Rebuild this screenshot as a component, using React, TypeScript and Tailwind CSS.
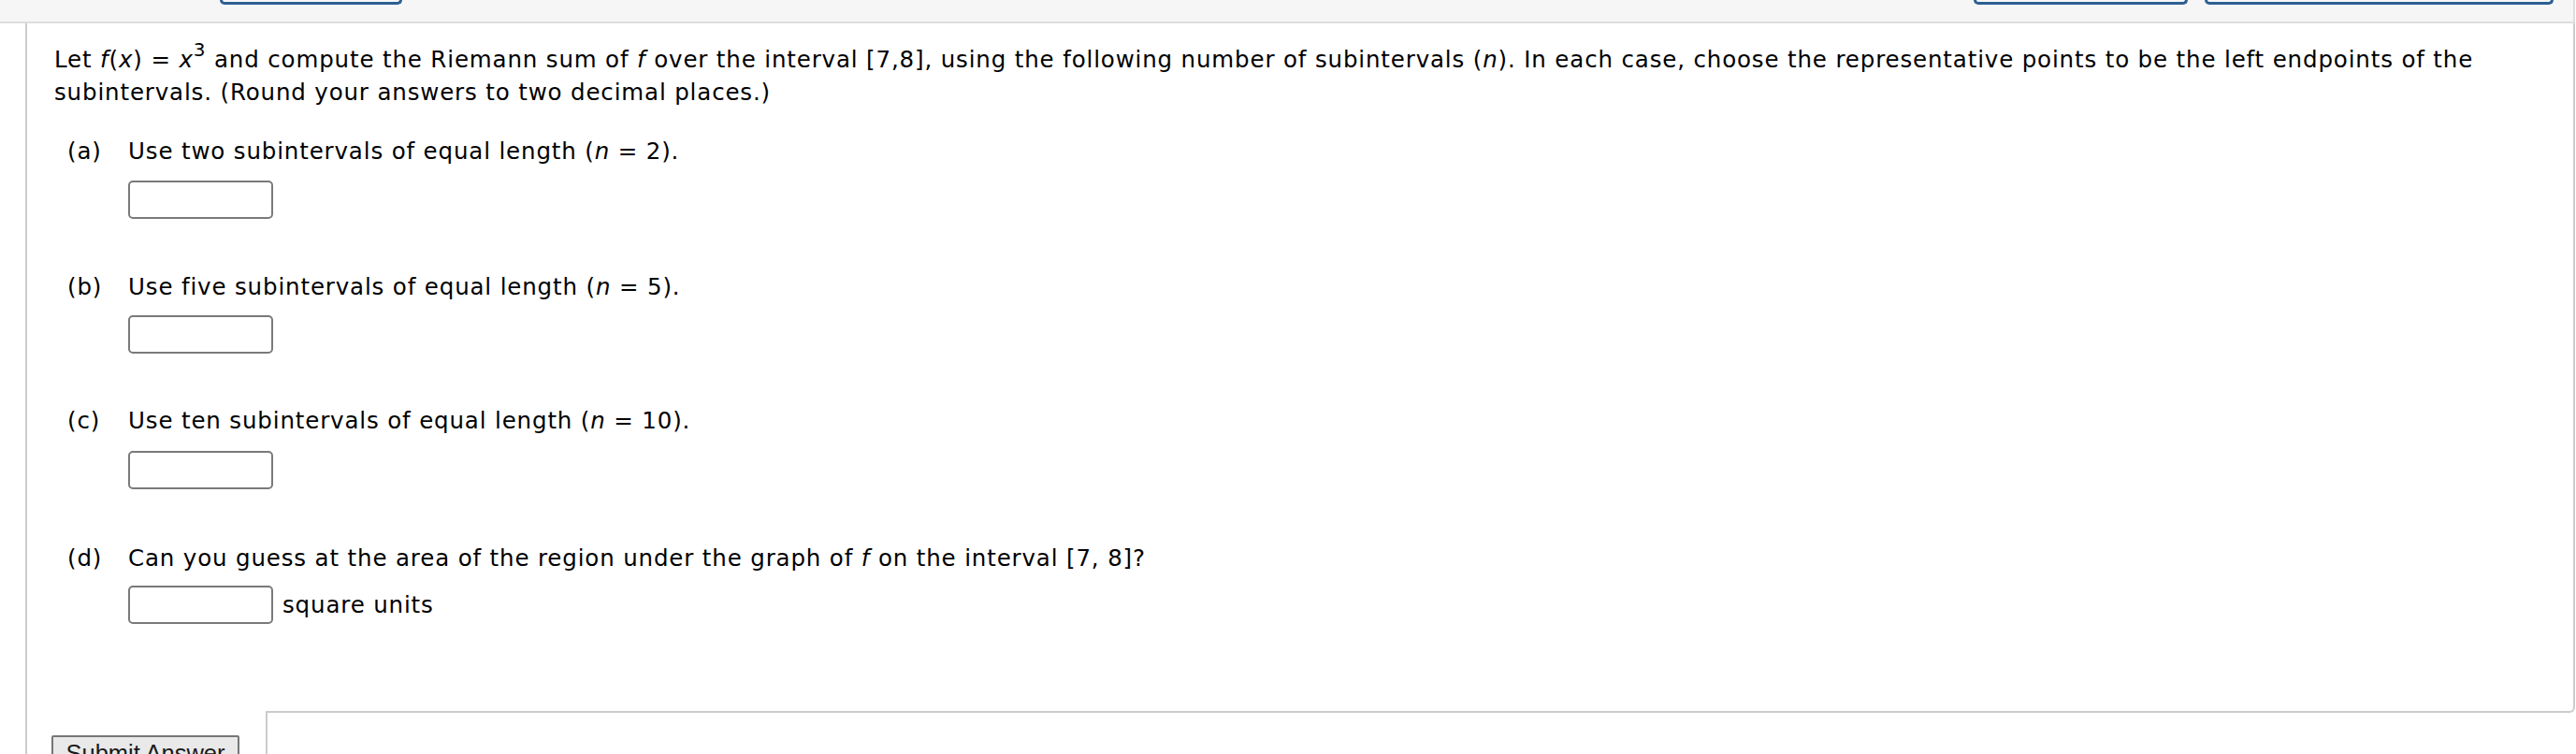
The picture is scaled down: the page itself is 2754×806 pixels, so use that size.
import React from "react";

const font = { fontFamily: '"DejaVu Sans", Verdana, sans-serif' };

function Q({
  label,
  children,
  topClass,
  inputClass,
  suffix,
}: {
  label: string;
  children: React.ReactNode;
  topClass: string;
  inputClass: string;
  suffix?: string;
}) {
  return (
    <div className={`flex ml-[14px] ${topClass}`}>
      <div className="w-[65px] shrink-0">{label}</div>
      <div className="flex flex-col">
        <div>{children}</div>
        <div className={`flex items-center ${inputClass}`}>
          <div className="w-[155px] h-[41px] border-2 border-[#7a7a7a] rounded-[5px] bg-white" />
          {suffix ? <span className="ml-[10px]">{suffix}</span> : null}
        </div>
      </div>
    </div>
  );
}

export default function App() {
  return (
    <div
      className="w-[2754px] h-[806px] overflow-hidden bg-white text-black text-[24.5px] leading-[35px] tracking-[0.85px]"
      style={font}
    >
      {/* top band */}
      <div className="h-[25px] bg-[#f6f6f6] border-b-2 border-r-2 border-[#dddddd] mr-[1px] flex items-start">
        <div className="ml-[235px] w-[195px] h-[5px] border-x-[3px] border-b-[3px] border-[#2e6093] rounded-b-[6px]" />
        <div className="flex-1" />
        <div className="w-[229px] h-[5px] border-x-[3px] border-b-[3px] border-[#2e6093] rounded-b-[6px]" />
        <div className="ml-[18px] mr-[21px] w-[373px] h-[5px] border-x-[3px] border-b-[3px] border-[#2e6093] rounded-b-[6px]" />
      </div>

      {/* panel */}
      <div className="ml-[27px] mr-[1px] border-l-2 border-[#cccccc]">
        <div className="border-r-2 border-[#cccccc] pl-[29px] pr-[30px] pt-[21px] pb-[61px]">
          <p>
            Let <i>f</i>(<i>x</i>) = <i>x</i>
            <sup className="text-[20px] leading-none relative -top-[12px] align-baseline">3</sup>{" "}
            and compute the Riemann sum of <i>f</i> over the interval [7,8], using the following
            number of subintervals (<i>n</i>). In each case, choose the representative points to be
            the left endpoints of the subintervals. (Round your answers to two decimal places.)
          </p>

          <Q label="(a)" topClass="mt-[28px]" inputClass="mt-[14px]">
            Use two subintervals of equal length (<i>n</i> = 2).
          </Q>
          <Q label="(b)" topClass="mt-[55px]" inputClass="mt-[13px]">
            Use five subintervals of equal length (<i>n</i> = 5).
          </Q>
          <Q label="(c)" topClass="mt-[54px]" inputClass="mt-[15px]">
            Use ten subintervals of equal length (<i>n</i> = 10).
          </Q>
          <Q label="(d)" topClass="mt-[56px]" inputClass="mt-[12px]" suffix="square units">
            Can you guess at the area of the region under the graph of <i>f</i> on the interval [7,
            8]?
          </Q>
        </div>

        <div className="flex h-[34px]">
          <div className="w-[255px] shrink-0" />
          <div className="flex-1 border-r-2 border-b-2 border-[#cccccc] rounded-br-[6px] -mt-[2px]" />
        </div>

        <div className="flex h-[80px]">
          <div className="w-[255px] shrink-0 pl-[26px] pt-[24px]">
            <div
              className="w-[201px] h-[46px] border-2 border-[#767676] bg-[#e9e9e9] rounded-[2px] text-[25.5px] leading-[34px] text-center text-[#1a1a1a] tracking-normal"
              style={{ fontFamily: '"Liberation Sans", Arial, sans-serif' }}
            >
              Submit Answer
            </div>
          </div>
          <div className="flex-1 border-l-2 border-[#cccccc]" />
        </div>
      </div>
    </div>
  );
}
